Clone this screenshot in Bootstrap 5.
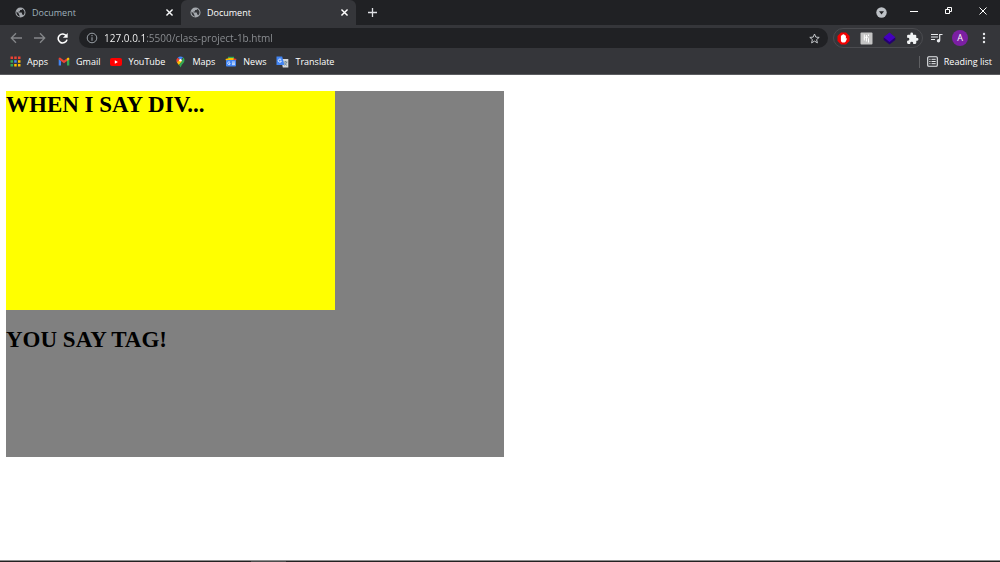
<!DOCTYPE html>
<html lang="en">
<head>
<meta charset="utf-8">
<meta name="viewport" content="width=device-width, initial-scale=1">
<title>Document</title>
<link href="https://cdn.jsdelivr.net/npm/bootstrap@5.3.0/dist/css/bootstrap.min.css" rel="stylesheet">
<style>
body{font-family:"Open Sans","Noto Sans",sans-serif;font-size:9px;line-height:12px;background:#fff}
svg{display:block;flex:none}
button{background:none;border:0;padding:0;color:inherit}
.tabstrip{background:#202124;color:#dfe1e5;height:25px}
.tab-item{width:181px;padding:0 7px 0 15px;color:#9fb0bb}
.tab-item a,.shortcut,.reading{color:inherit;text-decoration:none}
.tab-item.current{width:175px;padding:0 7px 0 9px;background:#35363a;color:#fff;border-radius:6px 6px 0 0}
.tab-link{gap:6px}
.plus{margin-left:11px}
.win-controls{gap:21px;padding-right:12px}
.toolbar{background:#35363a;color:#e8eaed;height:26px;padding:0 12px 0 8px}
.nav-keys{gap:10px;padding:0 10px 0 2px;color:#85878a}
.address{background:#202124;border-radius:10px;height:20px;padding:0 8px 0 7px;gap:6px;color:#c4c7ca}
.address input{min-width:0;border:0;outline:0;padding:0;font-size:10px;line-height:16px;color:#9aa0a6;-webkit-text-fill-color:transparent;background:linear-gradient(90deg,#fff 41px,#8f9296 41px);-webkit-background-clip:text;background-clip:text}
.extensions{border:1px solid #4b4c50;border-radius:10px;height:20px;padding:0 3px;gap:10px;margin-left:5px}
.right-keys{gap:9px;margin-left:7px}
.avatar{width:16px;height:16px;border-radius:50%;background:#7b1fa2;color:#fff}
.bookmarks{background:#35363a;color:#fff;height:24px;padding:0 8px 2px 10px;border-bottom:1px solid #5b5c5f}
.shortcuts{gap:10px}
.shortcut,.reading{gap:6px}
.reading{border-left:1px solid #5f6063;padding-left:7px;height:12px}
.viewport{padding:16px 6px}
.outer-box{width:calc(50% + 4px);max-width:100%;min-height:366px;background:#808080}
.inner-box{width:66%;min-height:219px;background:#ff0}
.shout{font-family:"Liberation Serif",serif;font-weight:700;font-size:23px;line-height:27px;color:#000;margin:0}
.second{margin-top:16px}
.taskbar-edge{height:2px;background:#222;border-top:1px solid #8d8d8d}
.task-active{width:35px;height:1px;margin-left:25.1%;background:#4c4c4c}
</style>
</head>
<body class="d-flex flex-column min-vh-100">
<svg width="0" height="0" class="position-absolute" aria-hidden="true">
<symbol id="globe" viewBox="0 0 24 24"><path d="M12 1a11 11 0 1 0 0 22 11 11 0 0 0 0-22Zm-1.200 19.600A8.800 8.800 0 0 1 3.500 10L9 15.500v1.200c0 1.200.8 2.200 1.800 2.200Zm7.600-2.800c-.3-.9-1.100-1.500-2.100-1.500h-1.100V13c0-.6-.5-1.100-1.100-1.100H7.700V9.700h2.200c.6 0 1.100-.5 1.100-1.100V6.400h2.200c1.200 0 2.200-1 2.200-2.200v-.4a8.800 8.800 0 0 1 3 14Z" fill="#a5a9ae"/></symbol>
<symbol id="cross" viewBox="0 0 8 8"><path d="m1.300 1.300 5.400 5.400m0-5.400L1.300 6.700" stroke="currentColor" stroke-width="1.300"/></symbol>
</svg>

<header>
<div class="tabstrip d-flex align-items-stretch">
  <div class="tab-item d-flex align-items-center justify-content-between">
    <a href="#" class="tab-link d-flex align-items-center"><svg width="11" height="11"><use href="#globe"/></svg>Document</a>
    <button aria-label="Close tab" class="text-light"><svg width="9" height="9"><use href="#cross"/></svg></button>
  </div>
  <div class="tab-item current d-flex align-items-center justify-content-between">
    <a href="#" class="tab-link d-flex align-items-center"><svg width="11" height="11"><use href="#globe"/></svg>Document</a>
    <button aria-label="Close tab"><svg width="9" height="9"><use href="#cross"/></svg></button>
  </div>
  <button class="plus" aria-label="New tab"><svg width="11" height="11" viewBox="0 0 11 11"><path d="M5.500 1v9M1 5.500h9" stroke="currentColor" stroke-width="1.300"/></svg></button>
  <div class="win-controls d-flex align-items-center ms-auto pb-1">
    <button aria-label="Search tabs" class="pt-1"><svg width="11" height="11" viewBox="0 0 11 11"><circle cx="5.500" cy="5.500" r="5.200" fill="#bdc1c6"/><path d="M3 4.200h5L5.500 7.500Z" fill="#202124"/></svg></button>
    <button aria-label="Minimize"><svg width="11" height="10" viewBox="0 0 11 10"><path d="M2 5.500h8" stroke="#fff"/></svg></button>
    <button aria-label="Restore" class="ms-1"><svg width="9" height="9" viewBox="0 0 9 9"><path d="M1.500 3.500h4v4h-4ZM3.500 3.500v-2h4v4h-2" fill="none" stroke="#fff"/></svg></button>
    <button aria-label="Close window" class="ms-1"><svg width="10" height="10" viewBox="0 0 10 10"><path d="m1.500 1.500 7 7m0-7-7 7" stroke="#fff"/></svg></button>
  </div>
</div>

<div class="toolbar d-flex align-items-center">
  <div class="nav-keys d-flex align-items-center">
    <button aria-label="Back"><svg width="13" height="12" viewBox="0 0 13 12"><path d="M12 6H1.500M6 1.200 1.300 6 6 10.800" fill="none" stroke="currentColor" stroke-width="1.300"/></svg></button>
    <button aria-label="Forward"><svg width="13" height="12" viewBox="0 0 13 12"><path d="M1 6h10.500M7 1.200 11.700 6 7 10.800" fill="none" stroke="currentColor" stroke-width="1.300"/></svg></button>
    <button aria-label="Reload" class="text-white"><svg width="13" height="13" viewBox="0 0 13 13"><path d="M10.400 4A4.500 4.500 0 1 0 11 7.600" fill="none" stroke="currentColor" stroke-width="1.600"/><path d="M11.700 1v4.800H6.900Z" fill="currentColor"/></svg></button>
  </div>
  <div class="address d-flex align-items-center flex-grow-1">
    <svg width="12" height="12" viewBox="0 0 12 12"><circle cx="6" cy="6" r="4.800" fill="none" stroke="#9aa0a6"/><path d="M6 5.300v3.400M6 3v1.200" stroke="#9aa0a6" stroke-width="1.100"/></svg>
    <input class="flex-grow-1" type="text" aria-label="Address" value="127.0.0.1:5500/class-project-1b.html">
    <button aria-label="Bookmark this page"><svg width="11" height="11" viewBox="0 0 11 11"><path d="m5.500 1 1.300 3.100 3.400.3-2.600 2.200.8 3.300-2.900-1.800-2.900 1.800.8-3.300L.8 4.400l3.400-.3Z" fill="none" stroke="currentColor"/></svg></button>
  </div>
  <div class="extensions d-flex align-items-center">
    <button aria-label="AdBlock"><svg width="13" height="13" viewBox="0 0 13 13"><path d="M4 .5h5L12.500 4v5L9 12.500H4L.5 9V4Z" fill="#f40000"/><path d="M3.900 5.300V3.500h1v-.8h1v-.5h1v.5h1v.8h1V7c.3-.7 1-.8 1.200-.4L9 9.100c-.5 1-1.200 1.500-2.500 1.500-1.700 0-2.600-.9-2.600-2.400Z" fill="#fff"/></svg></button>
    <button aria-label="Honey"><svg width="13" height="13" viewBox="0 0 13 13"><rect x=".5" y=".5" width="12" height="12" rx="1" fill="#c4c4c4"/><path d="M4.300 2.500v6M4.300 6.300c1-1.500 4.200-1.800 4.200.3v3.900M6.400 3v6.500M8.500 2.500v1.500" fill="none" stroke="#fff"/></svg></button>
    <button aria-label="Layers"><svg width="13" height="13" viewBox="0 0 13 13"><path d="M.7 5.500v2.500l5.800 4.500 5.800-4.500V5.500Z" fill="#24006e"/><path d="m6.500.4 5.800 4.800-5.800 4.800L.7 5.200Z" fill="#4400bd"/></svg></button>
    <button aria-label="Extensions"><svg width="13" height="13" viewBox="0 0 24 24"><path d="M20.500 11H19V7a2 2 0 0 0-2-2h-4V3.500a2.500 2.500 0 0 0-5 0V5H4a2 2 0 0 0-2 2v3.800h1.500a2.700 2.700 0 0 1 0 5.400H2V20c0 1.100.9 2 2 2h3.800v-1.500a2.700 2.700 0 0 1 5.400 0V22H17a2 2 0 0 0 2-2v-4h1.500a2.500 2.500 0 0 0 0-5Z" fill="#f1f3f4"/></svg></button>
  </div>
  <div class="right-keys d-flex align-items-center">
    <button aria-label="Media controls"><svg width="13" height="12" viewBox="0 0 13 12"><path d="M1 2.500h7M1 5h7M1 7.500h4M9.700 8.500V2.500h2.800" fill="none" stroke="currentColor" stroke-width="1.200"/><circle cx="8.500" cy="8.700" r="1.700" fill="currentColor"/></svg></button>
    <button class="avatar d-flex align-items-center justify-content-center" aria-label="Profile A">A</button>
    <button aria-label="Menu" class="ms-1"><svg width="7" height="12" viewBox="0 0 7 12" fill="currentColor"><circle cx="3" cy="2" r="1.200"/><circle cx="3" cy="6" r="1.200"/><circle cx="3" cy="10" r="1.200"/></svg></button>
  </div>
</div>

<nav class="bookmarks d-flex align-items-center justify-content-between" aria-label="Bookmarks">
  <div class="shortcuts d-flex">
    <a href="#" class="shortcut d-flex align-items-center"><svg width="11" height="11" viewBox="0 0 11 11"><path d="M.5.500h2.500v2.500H.5ZM4.200.500h2.500v2.500H4.200ZM8 .5h2.500v2.500H8Z" fill="#ea4335"/><path d="M.5 4.200h2.500v2.500H.5ZM.5 8h2.500v2.500H.5Z" fill="#34a853"/><path d="M4.200 4.200h2.500v2.500H4.200Z" fill="#4285f4"/><path d="M8 4.200h2.500v2.500H8ZM8 8h2.500v2.500H8ZM4.200 8h2.500v2.500H4.200Z" fill="#fbbc04"/></svg>Apps</a>
    <a href="#" class="shortcut d-flex align-items-center"><svg width="12" height="11" viewBox="0 0 12 11"><path d="M.7 3v6.500h2.300V5Z" fill="#4285f4"/><path d="M9 5v4.500h2.300V3Z" fill="#34a853"/><path d="M.7 3.200V2l1.300-.6 4 3 3-2.200v2.800L6 7.300Z" fill="#ea4335"/><path d="M9 5V2.200l1.200-.8 1.100.8v1.200Z" fill="#fbbc04"/></svg>Gmail</a>
    <a href="#" class="shortcut d-flex align-items-center"><svg width="12" height="10" viewBox="0 0 12 10"><rect y="1" width="12" height="8" rx="2" fill="#f00"/><path d="m4.800 3.200 3.100 1.800-3.100 1.800Z" fill="#fff"/></svg>YouTube</a>
    <a href="#" class="shortcut d-flex align-items-center"><svg width="11" height="12" viewBox="0 0 11 12"><path d="M5.500.5c-1 0-2 .4-2.800 1.200L5.500 4l2.600-2.700C7.300.7 6.500.5 5.500.5Z" fill="#4285f4"/><path d="M2.700 1.700A4 4 0 0 0 2.300 7L5 4Z" fill="#ea4335"/><path d="M2 6.300c.4 1 1.200 1.800 1.900 2.700L7 5.500 5 3.700Z" fill="#fbbc04"/><path d="M8.100 1.300c2 1.500 1.700 3.900.5 5.500C7.300 8.400 6.400 9.200 5.700 11.500 5.300 11 5 10 3.900 9L6.800 5.600Z" fill="#34a853"/><circle cx="5.500" cy="4.300" r="1.300" fill="#fff"/></svg>Maps</a>
    <a href="#" class="shortcut d-flex align-items-center"><svg width="12" height="11" viewBox="0 0 12 11"><path d="M3 .8h6V4H3Z" fill="#34a853"/><path d="m.5 3 3-.8 1 3-3 1Z" fill="#fbbc04"/><path d="m11.500 3-3-.8-1 3 3 1Z" fill="#ea4335"/><path d="M3.500 2h5v3h-5Z" fill="#fbbc04"/><rect x="1" y="4" width="10" height="6.500" rx=".8" fill="#4285f4"/><path d="M5 6.200a1.400 1.400 0 1 0 .1 1.900V7.300H4M7 6h3M7 7.300h3M7 8.600h3" fill="none" stroke="#fff" stroke-width=".7"/></svg>News</a>
    <a href="#" class="shortcut d-flex align-items-center"><svg width="13" height="12" viewBox="0 0 13 12"><path d="M5 3h7.300v8.500H6.800Z" fill="#d5d8db"/><path d="M7.500 6h4M9.500 5v1M10.700 6c-.4 1.500-1.200 2.500-2.500 3.300M8.200 7l2.800 2.500" fill="none" stroke="#607d8b" stroke-width=".8"/><path d="M.5.5h5.700l2.200 8.600H.5Z" fill="#4285f4"/><path d="M5.200 3.700a1.600 1.600 0 1 0 .2 1.500H4" fill="none" stroke="#fff" stroke-width=".8"/></svg>Translate</a>
  </div>
  <a href="#" class="reading d-flex align-items-center"><svg width="11" height="11" viewBox="0 0 11 11"><rect x=".7" y=".7" width="9.600" height="9.600" rx="1" fill="none" stroke="#e8eaed" stroke-width="1.100"/><path d="M2.300 3.300h1.200M4.500 3.300h4.200M2.300 5.500h1.200M4.500 5.500h4.200M2.300 7.700h1.200M4.500 7.700h4.200" stroke="#e8eaed"/></svg>Reading list</a>
</nav>
</header>

<main class="viewport flex-grow-1">
  <div class="outer-box">
    <div class="inner-box"><h1 class="shout">WHEN I SAY DIV...</h1></div>
    <h1 class="shout second">YOU SAY TAG!</h1>
  </div>
</main>
<footer class="taskbar-edge"><div class="task-active"></div></footer>
<script src="https://cdn.jsdelivr.net/npm/bootstrap@5.3.0/dist/js/bootstrap.bundle.min.js"></script>
</body>
</html>
